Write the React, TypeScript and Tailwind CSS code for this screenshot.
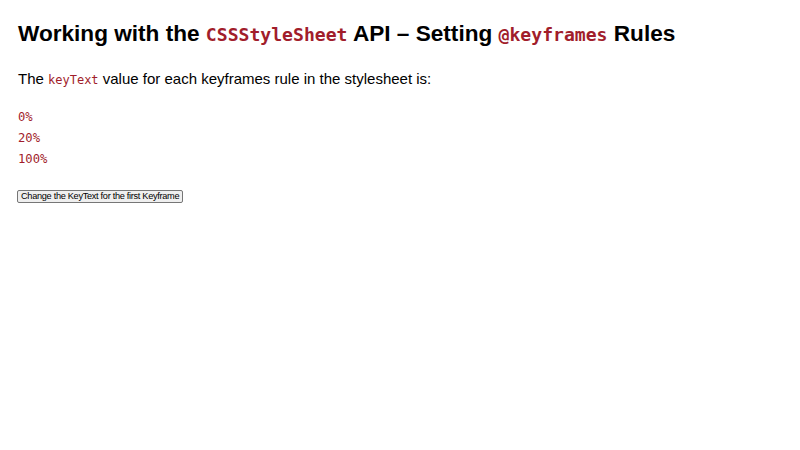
import React from 'react';

const mono = "font-['DejaVu_Sans_Mono',monospace] text-[#a11d2b]";

export default function App() {
  const frames = ['0%', '20%', '100%'];
  return (
    <div className="min-h-[450px] bg-white px-[18px] pt-[19px] font-['Liberation_Sans',Arial,sans-serif] text-black">
      <h1 className="text-[22.6px] font-bold leading-[30px]">
        Working with the <code className={`${mono} text-[18.1px]`}>CSSStyleSheet</code> API – Setting{' '}
        <code className={`${mono} text-[18.1px]`}>@keyframes</code> Rules
      </h1>

      <p className="mt-[19px] text-[15px] leading-[20px]">
        The <code className={`${mono} text-[12px]`}>keyText</code> value for each keyframes rule in the stylesheet is:
      </p>

      <ul className="mt-[19px] flex flex-col gap-[5px]">
        {frames.map((f) => (
          <li key={f} className={`${mono} text-[12.2px] leading-[16px]`}>
            {f}
          </li>
        ))}
      </ul>

      <button className="mt-[23px] -ml-px rounded-[2px] border border-[#767676] bg-[#efefef] px-[3px] text-[9.2px] leading-[11px] tracking-[-0.3px]">
        Change the KeyText for the first Keyframe
      </button>
    </div>
  );
}
